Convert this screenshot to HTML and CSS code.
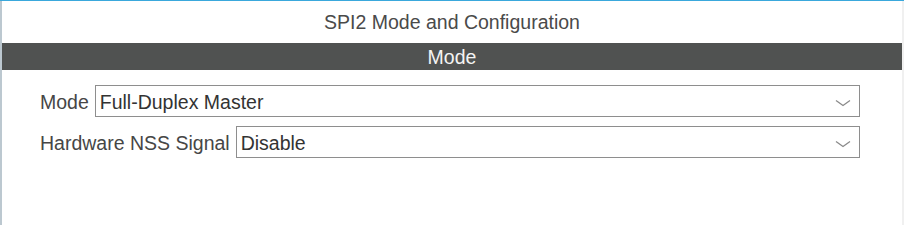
FILE: index.html
```html
<!DOCTYPE html>
<html lang="en">
<head>
    <meta charset="UTF-8">
    <title>SPI2 Mode and Configuration</title>
    <link rel="stylesheet" href="styles.css">
</head>
<body>
    <div class="panel">
        <div class="inner">
            <div class="title">SPI2 Mode and Configuration</div>
            <div class="bar">Mode</div>
            <div class="fields">
                <div class="row">
                    <span class="label">Mode</span>
                    <div class="combo">
                        <span class="value">Full-Duplex Master</span>
                        <svg class="arrow" width="16" height="8" viewBox="0 0 16 8"><polyline points="1,1.5 8,6.5 15,1.5" fill="none" stroke="#8a8a8a" stroke-width="1.3"/></svg>
                    </div>
                </div>
                <div class="row">
                    <span class="label">Hardware NSS Signal</span>
                    <div class="combo">
                        <span class="value">Disable</span>
                        <svg class="arrow" width="16" height="8" viewBox="0 0 16 8"><polyline points="1,1.5 8,6.5 15,1.5" fill="none" stroke="#8a8a8a" stroke-width="1.3"/></svg>
                    </div>
                </div>
            </div>
        </div>
    </div>
</body>
</html>
```

FILE: styles.css
```css
body{
    margin: 0;
    background-color: #ffffff;
    font-family: "Liberation Sans", Arial, sans-serif;
    font-size: 19.5px;
    color: #474747;
}
.panel{
    border-top: 1px solid #3aa8dc;
}
.inner{
    height: 224px;
    border-left: 2px solid #bcc8d0;
    border-right: 2px solid #f0f0f0;
}
.title{
    height: 42px;
    line-height: 42px;
    text-align: center;
    color: #4a4a4a;
}
.bar{
    height: 27px;
    line-height: 28px;
    text-align: center;
    background-color: #505251;
    color: #f4f4f4;
}
.fields{
    display: flex;
    flex-direction: column;
    gap: 9px;
    padding: 15px 42px 0 38px;
}
.row{
    display: flex;
    align-items: center;
    gap: 6px;
}
.label{
    white-space: nowrap;
    color: #464646;
    padding-top: 2px;
}
.combo{
    flex: 1;
    height: 30px;
    display: flex;
    align-items: center;
    justify-content: space-between;
    border: 1px solid #8e8e8e;
    padding: 0 8px 0 4px;
    color: #333333;
}
.value{
    line-height: 30px;
    padding-top: 2px;
}
.arrow{
    display: block;
    margin-top: 3px;
}
```
